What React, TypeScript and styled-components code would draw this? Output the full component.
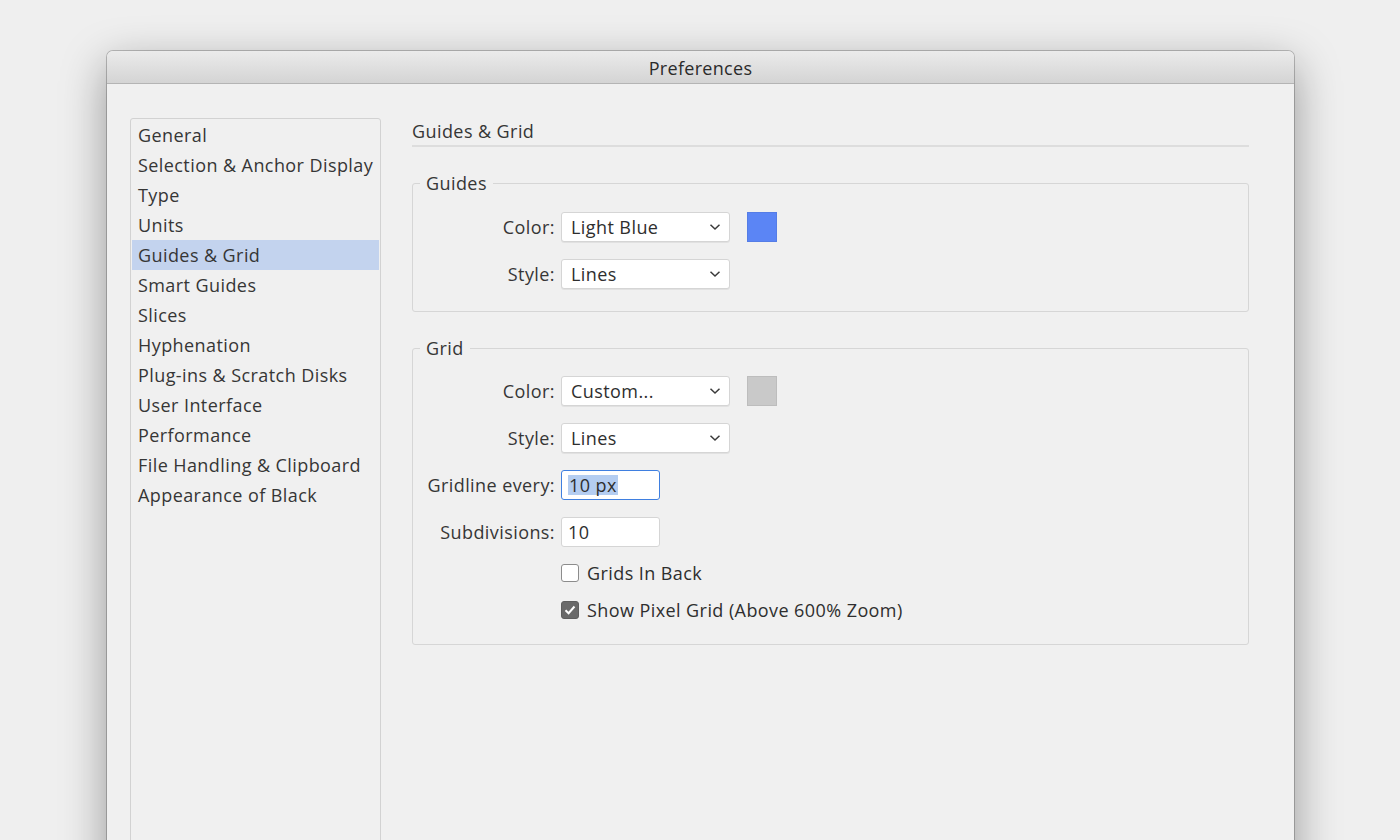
import React from 'react';
import styled, { createGlobalStyle } from 'styled-components';

const GlobalStyle = createGlobalStyle`
  html, body {
    margin: 0;
    padding: 0;
    background: #efefef;
    overflow: hidden;
  }
  body {
    font-family: 'Open Sans', 'Noto Sans', sans-serif;
    color: #363636;
  }
`;

const Page = styled.div`
  width: 1400px;
  height: 840px;
  padding: 51px 0 0 107px;
  box-sizing: border-box;
  overflow: hidden;
`;

const Window = styled.div`
  width: 1187px;
  height: 900px;
  background: #f0f0f0;
  border-radius: 6px 6px 0 0;
  box-shadow: 0 0 0 1px rgba(0, 0, 0, 0.22), 0 14px 45px rgba(0, 0, 0, 0.38);
  display: flex;
  flex-direction: column;
`;

const TitleBar = styled.div`
  height: 33px;
  flex-shrink: 0;
  box-sizing: border-box;
  padding-top: 2px;
  display: flex;
  align-items: center;
  justify-content: center;
  background: linear-gradient(#ebebeb, #d4d4d4);
  border-bottom: 1px solid #b4b4b4;
  border-radius: 6px 6px 0 0;
  font-size: 18px;
  letter-spacing: 0.3px;
  color: #2b2b2b;
`;

const Body = styled.div`
  flex: 1;
  display: flex;
  gap: 31px;
  padding: 34px 0 0 23px;
  font-size: 18px;
  letter-spacing: 0.42px;
`;

const Sidebar = styled.ul`
  list-style: none;
  margin: 0;
  padding: 1px;
  width: 251px;
  height: 760px;
  box-sizing: border-box;
  border: 1px solid #d2d2d2;
  border-radius: 3px;
`;

const SideItem = styled.li<{ $active?: boolean }>`
  height: 30px;
  line-height: 30px;
  padding-left: 6px;
  color: #363636;
  white-space: nowrap;
  background: ${({ $active }) => ($active ? '#c3d3ee' : 'transparent')};
`;

const Content = styled.div`
  width: 837px;
  display: flex;
  flex-direction: column;
`;

const Heading = styled.div`
  height: 26px;
  line-height: 26px;
  color: #363636;
  border-bottom: 2px solid #dddddd;
  padding-bottom: 1px;
`;

const Group = styled.fieldset<{ $top: number; $padTop: number; $padBottom: number }>`
  margin: ${({ $top }) => $top}px 0 0;
  padding: ${({ $padTop, $padBottom }) => `${$padTop}px 0 ${$padBottom}px`};
  border: 1px solid #d6d6d6;
  border-radius: 3px;
  display: flex;
  flex-direction: column;
  gap: 17px;
  min-width: 0;
`;

const Legend = styled.legend`
  margin-left: 7px;
  padding: 0 6px;
  height: 24px;
  line-height: 24px;
  color: #363636;
`;

const Row = styled.div`
  display: flex;
  align-items: center;
  height: 30px;
`;

const Label = styled.div`
  width: 148px;
  flex-shrink: 0;
  box-sizing: border-box;
  text-align: right;
  padding-right: 6px;
  color: #363636;
  white-space: nowrap;
`;

const Select = styled.div`
  width: 169px;
  height: 30px;
  box-sizing: border-box;
  display: flex;
  align-items: center;
  justify-content: space-between;
  padding: 0 8px 0 9px;
  background: #ffffff;
  border: 1px solid #d5d5d5;
  border-radius: 3px;
  box-shadow: 0 1px 0 rgba(0, 0, 0, 0.06);
  color: #2e2e2e;
`;

const Swatch = styled.div<{ $color: string }>`
  width: 30px;
  height: 30px;
  margin-left: 17px;
  box-sizing: border-box;
  background: ${({ $color }) => $color};
  border: 1px solid rgba(0, 0, 0, 0.06);
`;

const Field = styled.div<{ $focused?: boolean }>`
  width: 99px;
  height: 30px;
  box-sizing: border-box;
  display: flex;
  align-items: center;
  padding-left: 6px;
  background: #ffffff;
  border: 1px solid ${({ $focused }) => ($focused ? '#3f7fe0' : '#d5d5d5')};
  border-radius: 3px;
  color: #2e2e2e;
`;

const Selected = styled.span`
  background: #b4cdf1;
  padding: 0 1px;
  line-height: 20px;
`;

const CheckRow = styled.label<{ $first?: boolean }>`
  display: flex;
  align-items: center;
  gap: 8px;
  height: 26px;
  padding-left: 148px;
  margin-top: ${({ $first }) => ($first ? '-4px' : '-6px')};
  color: #2e2e2e;
`;

const Box = styled.span<{ $checked?: boolean }>`
  width: 18px;
  height: 18px;
  box-sizing: border-box;
  border-radius: 3px;
  display: flex;
  align-items: center;
  justify-content: center;
  background: ${({ $checked }) => ($checked ? '#6a6a6a' : '#ffffff')};
  border: 1px solid ${({ $checked }) => ($checked ? '#5e5e5e' : '#8c8c8c')};
`;

const Chevron = () => (
  <svg width="12" height="8" viewBox="0 0 12 8">
    <path d="M1.5 1.8 L6 6 L10.5 1.8" fill="none" stroke="#3a3a3a" strokeWidth="1.5" />
  </svg>
);

const Check = () => (
  <svg width="12" height="10" viewBox="0 0 12 10">
    <path d="M1.5 5.2 L4.6 8.2 L10.5 1.5" fill="none" stroke="#ffffff" strokeWidth="2" />
  </svg>
);

const sections = [
  'General',
  'Selection & Anchor Display',
  'Type',
  'Units',
  'Guides & Grid',
  'Smart Guides',
  'Slices',
  'Hyphenation',
  'Plug-ins & Scratch Disks',
  'User Interface',
  'Performance',
  'File Handling & Clipboard',
  'Appearance of Black',
];

const DropRow: React.FC<{ label: string; value: string; swatch?: string }> = ({ label, value, swatch }) => (
  <Row>
    <Label>{label}</Label>
    <Select>
      <span>{value}</span>
      <Chevron />
    </Select>
    {swatch && <Swatch $color={swatch} />}
  </Row>
);

export default function App() {
  return (
    <>
      <GlobalStyle />
      <Page>
        <Window>
          <TitleBar>Preferences</TitleBar>
          <Body>
            <Sidebar>
              {sections.map((s) => (
                <SideItem key={s} $active={s === 'Guides & Grid'}>
                  {s}
                </SideItem>
              ))}
            </Sidebar>
            <Content>
              <Heading>Guides &amp; Grid</Heading>
              <Group $top={24} $padTop={17} $padBottom={22}>
                <Legend>Guides</Legend>
                <DropRow label="Color:" value="Light Blue" swatch="#5b85f5" />
                <DropRow label="Style:" value="Lines" />
              </Group>
              <Group $top={24} $padTop={16} $padBottom={21}>
                <Legend>Grid</Legend>
                <DropRow label="Color:" value="Custom..." swatch="#c9c9c9" />
                <DropRow label="Style:" value="Lines" />
                <Row>
                  <Label>Gridline every:</Label>
                  <Field $focused>
                    <Selected>10 px</Selected>
                  </Field>
                </Row>
                <Row>
                  <Label>Subdivisions:</Label>
                  <Field>10</Field>
                </Row>
                <CheckRow $first>
                  <Box />
                  Grids In Back
                </CheckRow>
                <CheckRow>
                  <Box $checked>
                    <Check />
                  </Box>
                  Show Pixel Grid (Above 600% Zoom)
                </CheckRow>
              </Group>
            </Content>
          </Body>
        </Window>
      </Page>
    </>
  );
}
